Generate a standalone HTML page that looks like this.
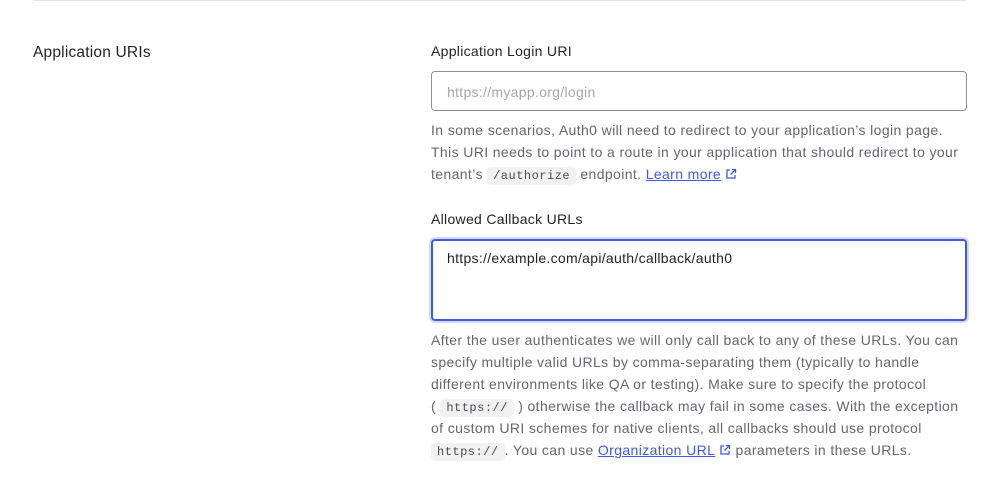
<!DOCTYPE html>
<html><head><meta charset="utf-8"><style>
body{margin:0;background:#fff;font-family:"Liberation Sans",sans-serif;color:#1e212a;width:997px;height:481px;overflow:hidden;position:relative}
.line{position:absolute;left:33px;top:0;width:933px;height:1px;background:#e3e4e6}
.left{position:absolute;left:33px;top:44px;font-size:15.5px;color:#1e212a;letter-spacing:0.2px}
.lab{position:absolute;left:431px;font-size:14px;font-weight:500;color:#1e212a;letter-spacing:0.3px}
.input{position:absolute;left:431px;width:536px;border:1px solid #8d8f96;border-radius:4px;box-sizing:border-box;letter-spacing:0.3px}
.help{position:absolute;left:431px;font-size:14px;line-height:22px;color:#65676e;white-space:nowrap;letter-spacing:0.38px}
code{font-family:"Liberation Mono",monospace;font-size:12px;line-height:14px;background:#f1f1f2;color:#4a4c52;padding:2px 6px;border-radius:4px;letter-spacing:0.5px;display:inline-block}
a{color:#3f59e4;text-decoration:underline}
.ext{display:inline-block;vertical-align:-1px;margin-left:4px}
</style></head><body>
<div class="line"></div>
<div class="left" style="top:44px">Application URIs</div>
<div class="lab" style="top:43px">Application Login URI</div>
<div class="input" style="top:71px;height:40px;padding:12px 15px;font-size:14px;color:#a4a6ab">https://myapp.org/login</div>
<div class="help" style="top:119px">In some scenarios, Auth0 will need to redirect to your application’s login page.<br>This URI needs to point to a route in your application that should redirect to your<br>tenant’s <code>/authorize</code> endpoint. <a>Learn more</a><svg class="ext" width="12" height="12" viewBox="0 0 12 12" fill="none" stroke="#3f59e4" stroke-width="1.3"><path d="M5 2H2v8h8V7M7 1.5h3.5V5M10.5 1.5L5.5 6.5"/></svg></div>
<div class="lab" style="top:211px">Allowed Callback URLs</div>
<div class="input" style="top:239px;height:82px;border:2px solid #3f59e4;box-shadow:0 0 0 2px #d4daf9;padding:9px 14px;font-size:14px;color:#1e212a">https://example.com/api/auth/callback/auth0</div>
<div class="help" style="top:329px">After the user authenticates we will only call back to any of these URLs. You can<br>specify multiple valid URLs by comma-separating them (typically to handle<br>different environments like QA or testing). Make sure to specify the protocol<br>( <code>https://</code> ) otherwise the callback may fail in some cases. With the exception<br>of custom URI schemes for native clients, all callbacks should use protocol<br><code>https://</code>. You can use <a>Organization URL</a><svg class="ext" width="12" height="12" viewBox="0 0 12 12" fill="none" stroke="#3f59e4" stroke-width="1.3"><path d="M5 2H2v8h8V7M7 1.5h3.5V5M10.5 1.5L5.5 6.5"/></svg> parameters in these URLs.</div>
</body></html>
